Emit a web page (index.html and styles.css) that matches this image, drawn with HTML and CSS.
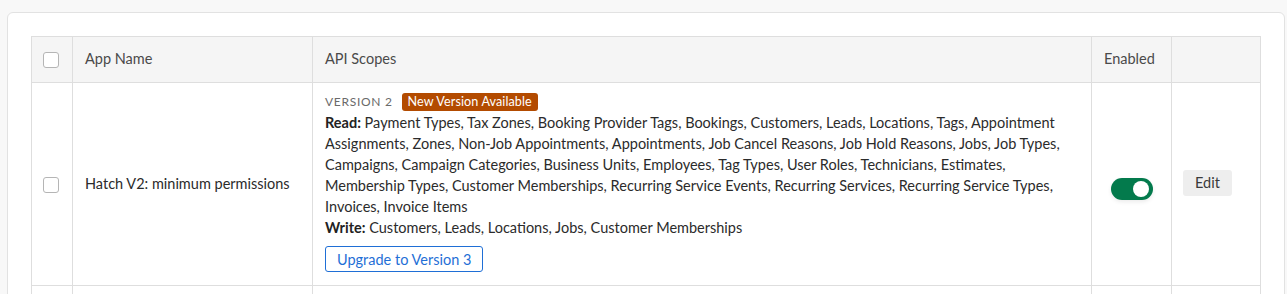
FILE: index.html
```html
<!DOCTYPE html>
<html lang="en">
<head>
<meta charset="utf-8">
<title>Apps</title>
<link rel="stylesheet" href="styles.css">
</head>
<body>
<div class="page">
  <div class="card">
    <table class="apps">
      <colgroup>
        <col class="c-check">
        <col class="c-name">
        <col class="c-scopes">
        <col class="c-enabled">
        <col class="c-actions">
      </colgroup>
      <thead>
        <tr>
          <th class="cell-check"><span class="checkbox"></span></th>
          <th>App Name</th>
          <th>API Scopes</th>
          <th>Enabled</th>
          <th></th>
        </tr>
      </thead>
      <tbody>
        <tr>
          <td class="cell-check"><span class="checkbox"></span></td>
          <td class="cell-name">Hatch V2: minimum permissions</td>
          <td class="cell-scopes">
            <div class="version-line">
              <span class="version">VERSION 2</span>
              <span class="badge">New Version Available</span>
            </div>
            <p class="scopes"><strong>Read:</strong> Payment Types, Tax Zones, Booking Provider Tags, Bookings, Customers, Leads, Locations, Tags, Appointment Assignments, Zones, Non-Job Appointments, Appointments, Job Cancel Reasons, Job Hold Reasons, Jobs, Job Types, Campaigns, Campaign Categories, Business Units, Employees, Tag Types, User Roles, Technicians, Estimates, Membership Types, Customer Memberships, Recurring Service Events, Recurring Services, Recurring Service Types, Invoices, Invoice Items</p>
            <p class="scopes"><strong>Write:</strong> Customers, Leads, Locations, Jobs, Customer Memberships</p>
            <button class="btn-outline" type="button">Upgrade to Version 3</button>
          </td>
          <td class="cell-toggle">
            <span class="toggle on"><span class="knob"></span></span>
          </td>
          <td class="cell-actions">
            <button class="btn-grey" type="button">Edit</button>
          </td>
        </tr>
        <tr class="next-row">
          <td></td><td></td><td></td><td></td><td></td>
        </tr>
      </tbody>
    </table>
  </div>
</div>
</body>
</html>
```

FILE: styles.css
```css
* { box-sizing: border-box; }

html, body {
  margin: 0;
  background: #f8f8f8;
  font-family: "Lato", "Noto Sans", sans-serif;
  color: #2b2b2b;
  font-size: 14.5px;
  line-height: 21px;
}

.page {
  padding: 12px 2px 0 7px;
  height: 294px;
  overflow: hidden;
}

.card {
  background: #ffffff;
  border: 1px solid #e2e2e2;
  border-radius: 6px;
  padding: 23px 24px 40px 23px;
}

.apps {
  width: 1229px;
  border-collapse: collapse;
  table-layout: fixed;
}

.c-check { width: 41px; }
.c-name { width: 240px; }
.c-scopes { width: 779px; }
.c-enabled { width: 80px; }
.c-actions { width: 89px; }

.apps th,
.apps td {
  border: 1px solid #dedede;
  padding: 11px 12px 13px;
  text-align: left;
  vertical-align: middle;
}

.apps th {
  background: #f5f5f5;
  font-weight: 400;
  color: #4a4a4a;
}

.cell-check {
  padding-left: 11px !important;
  padding-right: 0 !important;
}

.checkbox {
  display: block;
  width: 16px;
  height: 16px;
  border: 1px solid #b5b5b5;
  border-radius: 3px;
  background: #fff;
}

.cell-check .checkbox { margin-top: 3px; }

.cell-scopes {
  vertical-align: top !important;
  padding-top: 10px !important;
}

.version-line {
  display: flex;
  align-items: center;
  gap: 9px;
  height: 18px;
  margin-bottom: 1px;
}

.version {
  font-size: 12px;
  letter-spacing: 0.7px;
  color: #6a6a6a;
  line-height: 16px;
}

.badge {
  background: #b34b00;
  color: #fff;
  font-size: 12.6px;
  line-height: 18px;
  padding: 0 6px;
  border-radius: 3px;
  letter-spacing: 0.1px;
}

.scopes {
  margin: 0;
}

.scopes strong { font-weight: 700; color: #222; }

.btn-outline {
  margin-top: 8px;
  display: block;
  height: 26px;
  padding: 0 11px;
  border: 1px solid #1f6fd6;
  border-radius: 3px;
  background: #fff;
  color: #1f6fd6;
  font: inherit;
  font-size: 14.5px;
}

.cell-toggle { text-align: center !important; padding: 12px 0 !important; }

.toggle {
  display: inline-block;
  vertical-align: middle;
  width: 42px;
  height: 22px;
  border-radius: 11px;
  background: #c9c9c9;
  position: relative;
  box-shadow: 0 2px 4px rgba(0,0,0,0.08);
  margin-top: 10px;
}

.toggle.on { background: #037a4c; }

.toggle .knob {
  position: absolute;
  top: 3px;
  right: 4px;
  width: 16px;
  height: 16px;
  border-radius: 50%;
  background: #fff;
}

.cell-actions { padding: 12px 11px !important; }

.btn-grey {
  height: 26px;
  padding: 0 12px;
  border: none;
  border-radius: 3px;
  background: #eeeeee;
  color: #3a3a3a;
  font: inherit;
  font-size: 14.5px;
  margin-top: -26px;
}

.next-row td { height: 30px; padding: 0; }
```
